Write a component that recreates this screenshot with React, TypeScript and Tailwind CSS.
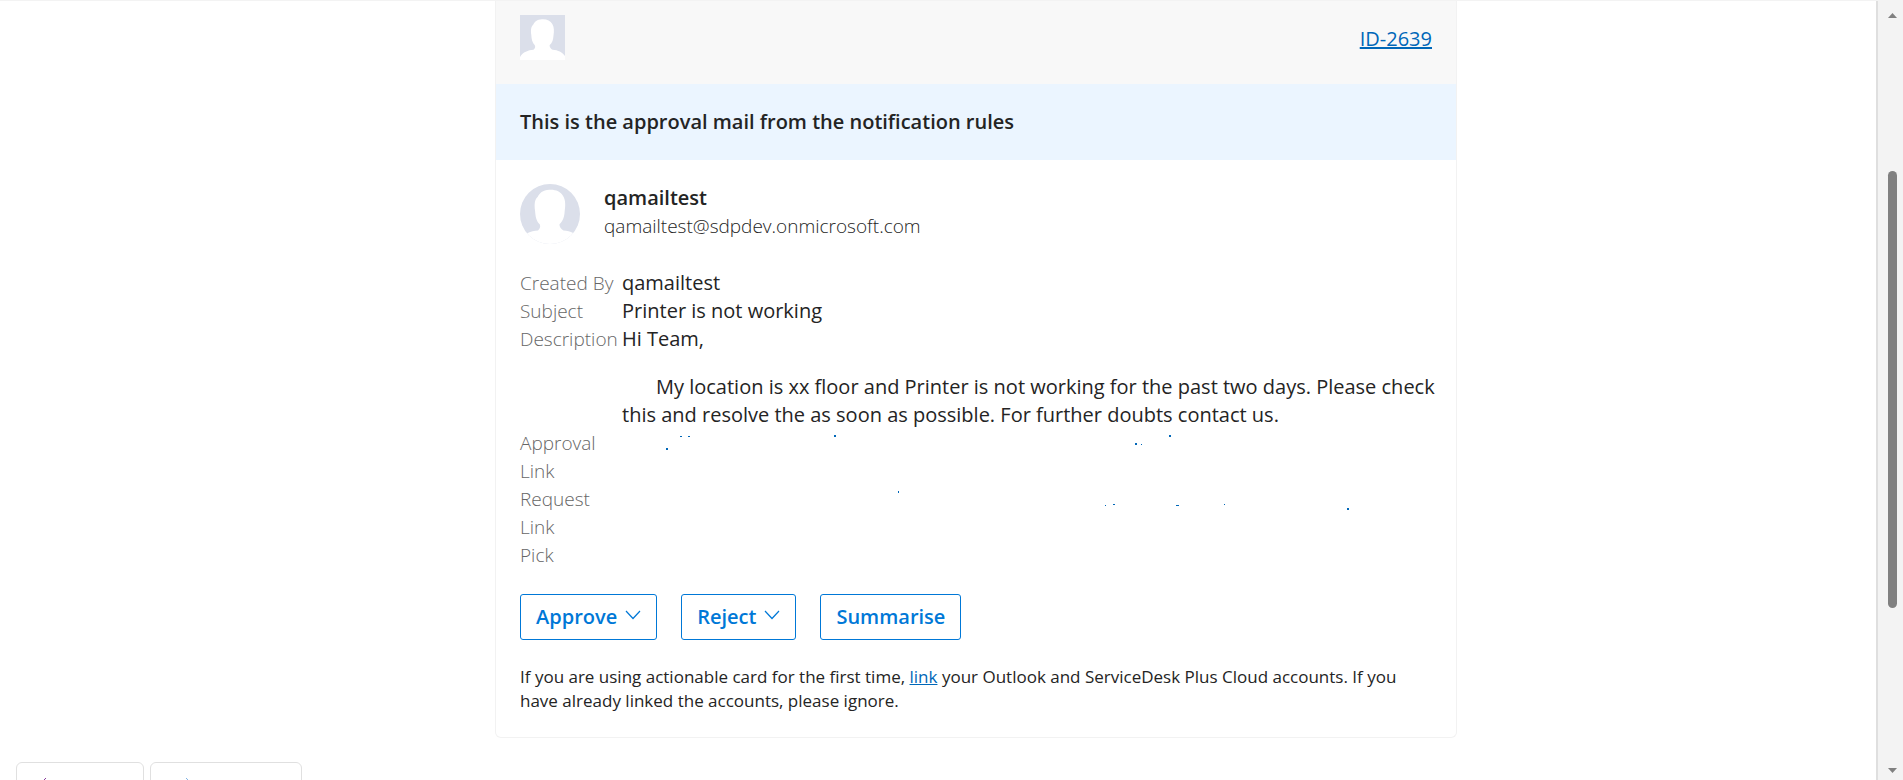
import { useState } from "react";
import type { ReactNode } from "react";

//person silhouette used for both avatars
function Avatar({ className }: { className: string }) {
  return (
    <svg viewBox="0 0 45 45" className={className} role="img" aria-label="qamailtest">
      <rect width="45" height="45" fill="#dbdfea" />
      <path
        fill="#ffffff"
        d="M0 45V42C3 37 8 35.2 13.5 34.8C15 33.5 15.6 32 14.8 30.2C12 27.5 11.6 24 11.3 20C10.6 15.5 11 11.5 13.2 9.8C14.5 7 17 4.4 22 4.3C26.500 4 30.500 5.500 32.300 9C34.200 12 34.200 16 33.500 20.500C33.300 24.500 32.400 27.800 29.600 30.200C29.400 32 30.800 33.800 32.600 34.800C38 35 42.500 37.500 45 41V45Z"
      />
    </svg>
  );
}

function ChevronDown() {
  return (
    <svg viewBox="0 0 16 10" className="mb-1 h-[10px] w-4" fill="none" stroke="currentColor">
      <path d="M1 1l7 7.500 7-7.500" strokeWidth="1.200" />
    </svg>
  );
}

function ActionButton({ label, menu }: { label: string; menu?: boolean }) {
  const [open, setOpen] = useState(false);

  return (
    <button
      type="button"
      aria-expanded={menu ? open : undefined}
      onClick={() => setOpen(!open)}
      className="flex h-[46px] items-center gap-2 rounded-[3px] border border-[#0078d7] px-[15px] text-xl font-semibold text-[#0078d7]"
    >
      {label}
      {menu && <ChevronDown />}
    </button>
  );
}

function Fact({ title, children }: { title: string; children?: ReactNode }) {
  return (
    <>
      <dt className="text-[19px] font-light whitespace-nowrap text-[#666666]">{title}</dt>
      <dd>{children}</dd>
    </>
  );
}

//what is left of the hidden approval and request links
function HiddenLinks() {
  return (
    <svg viewBox="0 0 810 84" className="h-[84px] w-full" preserveAspectRatio="xMinYMin" fill="#0067b8" aria-hidden="true">
      <path d="M44 19h2v2h-2zM58 7h2v1h-2zM66 7h2v1h-2zM212 6h2v2h-2zM513 14h2v2h-2zM519 15h1v1h-1zM547 6h2v2h-2z" />
      <path d="M276 62h1v2h-1zM483 76h1v1h-1zM491 75h2v1h-2zM554 76h3v1h-3zM602 75h1v1h-1zM725 79h2v2h-2z" />
    </svg>
  );
}

function Scrollbar() {
  return (
    <div className="flex w-[27px] shrink-0 flex-col items-center border-l-2 border-[#dfdfdf] bg-[#f3f3f3] pt-3 pb-[7px] pl-1" aria-hidden="true">
      <svg viewBox="0 0 9 5" className="h-[5px] w-[9px]" fill="#808080">
        <path d="M4.500 0L9 5H0z" />
      </svg>
      <div className="flex w-[9px] flex-1 flex-col">
        <div className="grow-[153]" />
        <div className="grow-[437] rounded-full bg-[#808080]" />
        <div className="grow-[160]" />
      </div>
      <svg viewBox="0 0 9 5" className="h-[5px] w-[9px]" fill="#808080">
        <path d="M0 0h9L4.500 5z" />
      </svg>
    </div>
  );
}

function App() {
  return (
    <div className="flex h-screen overflow-hidden border-t border-[#f3f3f3] bg-white font-['Open_Sans',sans-serif] text-xl leading-7 text-[#242424]">
      <div className="flex min-w-0 flex-1 flex-col">
        <main className="flex shrink-0 justify-center pl-[76px]">
          <article className="w-full max-w-[962px] rounded-b-md border border-t-0 border-[#f2f2f2]">
            <header className="flex items-start justify-between bg-[#f8f8f8] px-6 pt-[14px] pb-6">
              <Avatar className="size-[45px]" />
              <a href="#request" className="mt-[10px] text-[#0067b8] underline">
                ID-2639
              </a>
            </header>

            <h1 className="bg-[#ebf5ff] px-6 py-6 font-semibold">
              This is the approval mail from the notification rules
            </h1>

            <div className="flex flex-col gap-[25px] p-6">
              <div className="flex gap-6">
                <Avatar className="size-[60px] rounded-full" />
                <div>
                  <p className="font-semibold">qamailtest</p>
                  <p className="text-[19px] font-light">qamailtest@sdpdev.onmicrosoft.com</p>
                </div>
              </div>

              <dl className="grid grid-cols-[98px_1fr] gap-x-1">
                <Fact title="Created By">qamailtest</Fact>
                <Fact title="Subject">Printer is not working</Fact>
                <Fact title="Description">
                  <p>Hi Team,</p>
                  <p className="-mr-2 mt-5 indent-[34px]">
                    My location is xx floor and Printer is not working for the past two days. Please check this and
                    resolve the as soon as possible. For further doubts contact us.
                  </p>
                </Fact>
                <dt className="text-[19px] font-light text-[#666666]">
                  Approval
                  <br />
                  Link
                  <br />
                  Request
                  <br />
                  Link
                  <br />
                  Pick
                </dt>
                <dd>
                  <HiddenLinks />
                </dd>
              </dl>

              <div className="flex gap-6">
                <ActionButton label="Approve" menu />
                <ActionButton label="Reject" menu />
                <ActionButton label="Summarise" />
              </div>

              <p className="text-[17px] leading-6">
                If you are using actionable card for the first time,{" "}
                <a href="#link" className="text-[#0067b8] underline">
                  link
                </a>{" "}
                your Outlook and ServiceDesk Plus Cloud accounts. If you have already linked the accounts, please
                ignore.
              </p>
            </div>
          </article>
        </main>

        <footer className="flex shrink-0 gap-[6px] px-4 pt-6">
          <button type="button" aria-label="Reply" className="flex h-10 w-32 items-start rounded-md border border-[#e0e0e0] px-6 pt-[14px] text-[#8a3b9c]">
            <svg viewBox="0 0 16 16" className="size-4" fill="none" stroke="currentColor">
              <path d="M5 1L1 5l4 4M1 5h9a4 4 0 0 1 4 4v3" />
            </svg>
          </button>
          <button type="button" aria-label="Forward" className="flex h-10 w-[152px] items-start rounded-md border border-[#e0e0e0] px-6 pt-[14px] text-[#7fb2e5]">
            <svg viewBox="0 0 16 16" className="size-4" fill="none" stroke="currentColor">
              <path d="M11 1l4 4-4 4M15 5H6a4 4 0 0 0-4 4v3" />
            </svg>
          </button>
        </footer>
      </div>
      <Scrollbar />
    </div>
  );
}

export default App;
